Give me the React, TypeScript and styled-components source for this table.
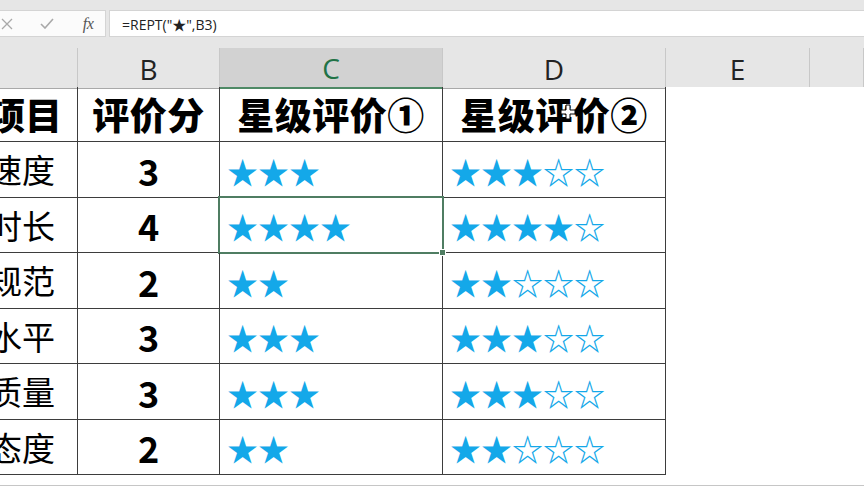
import React from 'react';
import styled, { createGlobalStyle } from 'styled-components';

const GlobalStyle = createGlobalStyle`
  html, body { margin: 0; padding: 0; background: #fff; overflow: hidden; }
  body { font-family: "Noto Sans CJK SC", "Noto Sans", sans-serif; }
`;

const COLS = '78px 142px 223px 223px 144px 1fr';

const Page = styled.div`
  position: relative;
  width: 864px;
  height: 486px;
  overflow: hidden;
  display: flex;
  flex-direction: column;
  background: #fff;
`;

const TopStrip = styled.div`
  flex: none;
  height: 10px;
  background: #e6e6e6;
`;

const FormulaRow = styled.div`
  flex: none;
  height: 27px;
  display: flex;
  gap: 3px;
  background: #e6e6e6;
`;

const ToolBox = styled.div`
  width: 107px;
  margin-left: -1px;
  box-sizing: border-box;
  border: 1px solid #d4d4d4;
  background: #fbfbfb;
  display: flex;
  align-items: center;
  padding-left: 0;
`;

const ToolIcon = styled.span<{ $w: number }>`
  width: ${(p) => p.$w}px;
  display: flex;
  justify-content: center;
  align-items: center;
  color: #a8a8a8;
`;

const Fx = styled.span`
  font-family: "Liberation Serif", serif;
  font-style: italic;
  font-size: 16px;
  color: #555;
  letter-spacing: -0.5px;
`;

const FormulaBox = styled.div`
  flex: 1;
  box-sizing: border-box;
  border: 1px solid #d4d4d4;
  border-right: none;
  background: #fff;
  display: flex;
  align-items: center;
  padding-left: 12px;
  font-family: "Open Sans", "Noto Sans CJK SC", sans-serif;
  font-size: 14px;
  color: #222;
`;

const Gap = styled.div`
  flex: none;
  height: 11px;
  background: #e6e6e6;
`;

const HeaderRow = styled.div`
  flex: none;
  height: 39px;
  display: grid;
  grid-template-columns: ${COLS};
  background: #e6e6e6;
`;

const ColHead = styled.div<{ $active?: boolean }>`
  box-sizing: border-box;
  display: flex;
  justify-content: center;
  align-items: center;
  border-right: 1px solid #c8c8c8;
  border-bottom: ${(p) => (p.$active ? '2px solid #4f8a66' : '1px solid #a9a9a9')};
  background: ${(p) => (p.$active ? '#d2d2d2' : '#e6e6e6')};
  color: ${(p) => (p.$active ? '#217346' : '#222')};
  font-family: "Open Sans", sans-serif;
  font-size: 28px;
  padding-top: 1px;
`;

const Row = styled.div<{ $h: number }>`
  flex: none;
  height: ${(p) => p.$h}px;
  display: grid;
  grid-template-columns: ${COLS};
`;

const Cell = styled.div<{ $head?: boolean }>`
  position: relative;
  box-sizing: border-box;
  border-right: 1px solid #3d3d3d;
  border-bottom: 1px solid #3d3d3d;
  display: flex;
  align-items: center;
  justify-content: center;
  color: #000;
  font-weight: ${(p) => (p.$head ? 900 : 400)};
  font-size: 34px;
  line-height: 1;
  white-space: nowrap;
`;

const NameCell = styled(Cell)<{ $pad: number }>`
  justify-content: flex-end;
  overflow: hidden;
  padding-right: ${(p) => p.$pad}px;
  font-size: ${(p) => (p.$head ? 37 : 33)}px;
`;

const ScoreCell = styled(Cell)`
  font-family: "Noto Sans CJK SC", sans-serif;
  font-weight: 700;
  font-size: 36px;
`;

const HeadCell = styled(Cell)`
  font-size: 37px;
  font-weight: 900;
  letter-spacing: 0.5px;
`;

const StarCell = styled(Cell)<{ $selected?: boolean }>`
  justify-content: flex-start;
  padding-left: 7px;
  padding-top: 1px;
  font-size: 31px;
  color: #14a8e9;
  ${(p) =>
    p.$selected &&
    `
    &::after {
      content: '';
      position: absolute;
      left: -2px;
      top: -2px;
      right: -2px;
      bottom: -2px;
      border: 2px solid #4f7d62;
      pointer-events: none;
    }
    &::before {
      content: '';
      position: absolute;
      right: -4px;
      bottom: -4px;
      width: 5px;
      height: 5px;
      background: #4f7d62;
      border: 1px solid #fff;
      z-index: 2;
    }
  `}
`;

const BlankCell = styled.div`
  background: #fff;
`;

const Tail = styled.div`
  flex: 1;
  border-bottom: 1px solid #c6c6c6;
`;

const Cursor = styled.svg`
  position: absolute;
  left: 560px;
  top: 104px;
`;

const rows = [
  { name: '响应速度', score: 3, h: 56 },
  { name: '服务时长', score: 4, h: 55, sel: true },
  { name: '操作规范', score: 2, h: 56 },
  { name: '技术水平', score: 3, h: 55 },
  { name: '服务质量', score: 3, h: 56 },
  { name: '服务态度', score: 2, h: 55 },
];

export default function App() {
  return (
    <Page>
      <GlobalStyle />
      <TopStrip />
      <FormulaRow>
        <ToolBox>
          <ToolIcon $w={14}>
            <svg width="12" height="12" viewBox="0 0 12 12">
              <path d="M1 1 L11 11 M11 1 L1 11" stroke="#a9a9a9" strokeWidth="1.3" fill="none" />
            </svg>
          </ToolIcon>
          <ToolIcon $w={66}>
            <svg width="14" height="11" viewBox="0 0 14 11">
              <path d="M1 6 L5 10 L13 1" stroke="#a9a9a9" strokeWidth="1.6" fill="none" />
            </svg>
          </ToolIcon>
          <ToolIcon $w={16}>
            <Fx>fx</Fx>
          </ToolIcon>
        </ToolBox>
        <FormulaBox>=REPT("★",B3)</FormulaBox>
      </FormulaRow>
      <Gap />
      <HeaderRow>
        <ColHead />
        <ColHead>B</ColHead>
        <ColHead $active>C</ColHead>
        <ColHead>D</ColHead>
        <ColHead>E</ColHead>
        <ColHead />
      </HeaderRow>
      <Row $h={55}>
        <NameCell $head $pad={15}>评价项目</NameCell>
        <HeadCell $head>评价分</HeadCell>
        <HeadCell $head>星级评价①</HeadCell>
        <HeadCell $head>星级评价②</HeadCell>
        <BlankCell />
        <BlankCell />
      </Row>
      {rows.map((r) => (
        <Row key={r.name} $h={r.h}>
          <NameCell $pad={22}>{r.name}</NameCell>
          <ScoreCell>{r.score}</ScoreCell>
          <StarCell $selected={r.sel}>{'★'.repeat(r.score)}</StarCell>
          <StarCell>{'★'.repeat(r.score) + '☆'.repeat(5 - r.score)}</StarCell>
          <BlankCell />
          <BlankCell />
        </Row>
      ))}
      <Tail />
      <Cursor width="16" height="16" viewBox="0 0 16 16">
        <path d="M6 1 H10 V6 H15 V10 H10 V15 H6 V10 H1 V6 H6 Z" fill="#fff" stroke="#000" strokeWidth="1" />
      </Cursor>
    </Page>
  );
}
